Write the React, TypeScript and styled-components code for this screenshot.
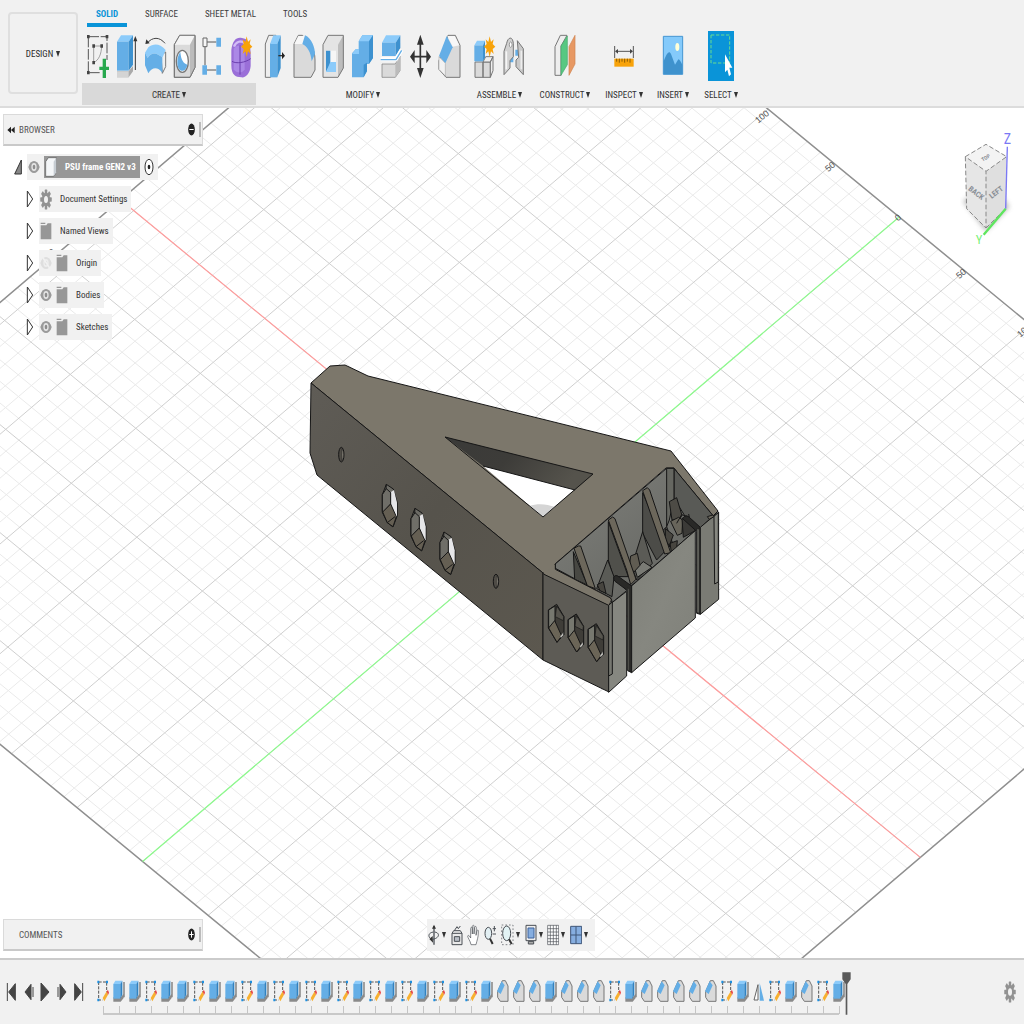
import React from "react";
import styled, { createGlobalStyle } from "styled-components";

const GlobalStyle = createGlobalStyle`
  * { box-sizing: border-box; }
  html, body { margin: 0; padding: 0; }
  body {
    background: #fff;
    color: #3c3c3c;
    font-family: "Liberation Sans Narrow", "Roboto Condensed", "Liberation Sans", Arial, sans-serif;
    font-size: 9px;
    line-height: 12px;
  }
  button {
    margin: 0;
    padding: 0;
    border: 0;
    background: none;
    color: inherit;
    font: inherit;
    cursor: pointer;
  }
  svg { display: block; }
  ul, ol { margin: 0; padding: 0; list-style: none; }
`;

const Page = styled.div`
  display: flex;
  flex-direction: column;
  min-height: 100vh;
`;

/* ---------- toolbar ---------- */

const Toolbar = styled.header`
  display: flex;
  align-items: stretch;
  height: 108px;
  background: #f1f1f1;
  border-bottom: 2px solid #dcdcdc;
`;

const WorkspaceButton = styled.button`
  display: flex;
  align-items: center;
  justify-content: center;
  gap: 3px;
  width: 70px;
  height: 82px;
  margin: 12px 4px 0 8px;
  padding-top: 2px;
  border: 2px solid #dfdfdf;
  border-radius: 4px;
  color: #2b2b2b;
`;

const Ribbon = styled.div`
  display: flex;
  flex-direction: column;
  flex: 1;
`;

const Tabs = styled.nav`
  display: flex;
  gap: 9px;
  height: 28px;
  padding: 0 5px;
`;

const Tab = styled.button<{ $active?: boolean }>`
  height: 27px;
  padding: 4px 9px 0;
  white-space: nowrap;
  color: ${(p) => (p.$active ? "#0a94d8" : "#3c3c3c")};
  font-weight: ${(p) => (p.$active ? 700 : 400)};
  border-bottom: 4px solid ${(p) => (p.$active ? "#0a94d8" : "transparent")};
`;

const Groups = styled.div`
  display: flex;
`;

const Group = styled.section<{ $width: number }>`
  position: relative;
  display: flex;
  flex-direction: column;
  align-items: center;
  width: ${(p) => p.$width}px;
  &:first-child { margin-right: 3px; }
  & + &::before {
    content: "";
    position: absolute;
    left: 0;
    top: 6px;
    width: 1px;
    height: 68px;
    background: #dadada;
  }
`;

const Tools = styled.div`
  display: flex;
  height: 55px;
  padding-top: 4px;
`;

const ToolButton = styled.button`
  display: flex;
  justify-content: center;
  width: 29px;
  height: 48px;
`;

const SelectTool = styled(ToolButton)`
  width: 26px;
  height: 50px;
  margin-top: -1px;
  background: #0a94d8;
`;

const GroupMenu = styled.button<{ $open?: boolean }>`
  display: flex;
  align-items: center;
  justify-content: center;
  gap: 2px;
  align-self: stretch;
  height: 22px;
  padding-top: 2px;
  white-space: nowrap;
  color: #333;
  background: ${(p) => (p.$open ? "#d9d9d9" : "transparent")};
`;

const CaretShape = styled.span`
  width: 0;
  height: 0;
  border: solid transparent;
  border-width: 6px 2px 0;
  border-top-color: #333;
`;

/* ---------- viewport ---------- */

const Viewport = styled.main`
  position: relative;
  display: flex;
  flex-direction: column;
  justify-content: space-between;
  flex: 1;
  min-height: 600px;
  overflow: hidden;
`;

const SceneLayer = styled.svg`
  position: absolute;
  inset: 0;
  width: 100%;
  height: 100%;
`;

const UpperRow = styled.div`
  position: relative;
  display: flex;
  justify-content: space-between;
  align-items: flex-start;
  padding: 6px 8px 0 3px;
`;

const LowerRow = styled.div`
  position: relative;
  display: grid;
  grid-template-columns: 1fr auto 1fr;
  align-items: end;
  padding: 0 5px 7px 3px;
`;

const Panel = styled.div`
  display: flex;
  align-items: center;
  width: 200px;
  height: 32px;
  padding: 0 1px 0 3px;
  background: #f1f1f1;
  border: 1px solid #dadada;
  border-bottom: 2px solid #c9c9c9;
  color: #555;
`;

const PanelLead = styled.span`
  width: 8px;
`;

const PanelTitle = styled.h2`
  flex: 1;
  margin: 0;
  padding-left: 4px;
  font: inherit;
`;

const PanelIcon = styled.button`
  display: flex;
  width: 8px;
  margin-right: 3px;
`;

const Grip = styled.span`
  width: 2px;
  height: 15px;
  background: #bbb;
`;

const Tree = styled.ul`
  padding-top: 5px;
`;

const TreeRow = styled.li<{ $depth: number }>`
  display: flex;
  align-items: center;
  gap: 5px;
  height: 32px;
  padding-left: ${(p) => (p.$depth ? 23 : 11)}px;
`;

const Expander = styled.button`
  width: 8px;
`;

const TreeItem = styled.div`
  display: flex;
  align-items: center;
  gap: 4px;
  height: 26px;
  padding: 0 4px 0 1px;
  background: #f1f1f1;
  white-space: nowrap;
  color: #333;
`;

const TreeLabel = styled.span`
  padding-left: 4px;
`;

const RootLabel = styled.span`
  display: flex;
  align-items: center;
  gap: 8px;
  height: 22px;
  padding: 0 4px 0 1px;
  background: #979797;
  color: #fff;
  font-weight: 700;
`;

const NavBar = styled.div`
  display: flex;
  align-items: center;
  justify-content: space-between;
  width: 168px;
  height: 32px;
  padding: 0 7px 0 1px;
  background: #f1f1f1;
`;

const NavButton = styled.button`
  display: flex;
  align-items: center;
  gap: 2px;
`;

/* ---------- timeline ---------- */

const Timeline = styled.footer`
  display: flex;
  align-items: flex-start;
  height: 66px;
  padding: 0 6px 0 4px;
  background: #f1f1f1;
  border-top: 2px solid #cbcbcb;
`;

const Playback = styled.div`
  display: flex;
  justify-content: space-between;
  width: 82px;
  margin: 21px 9px 0 0;
`;

const PlayButton = styled.button`
  display: flex;
  justify-content: center;
  width: 16px;
`;

const Features = styled.ol`
  display: flex;
  padding-top: 18px;
`;

const Feature = styled.li`
  display: flex;
  flex-direction: column;
  align-items: center;
  width: 16px;
  padding-bottom: 1px;
  background: linear-gradient(#c8c8c8, #c8c8c8) 0 100% / 100% 2px no-repeat;
  &::after {
    content: "";
    width: 1px;
    height: 8px;
    margin-top: 2px;
    background: #c4c4c4;
  }
  &:first-child { background-position: 8px 100%; }
  &:last-child { background-size: 50% 2px; }
`;

const Marker = styled.div`
  margin: 12px 0 0 -5px;
`;

const Settings = styled.button`
  margin: 21px 2px 0 auto;
`;

/* ---------- tool icons ---------- */

const BLUE = "#64aee6";
const LIGHT = "#8ccbfa";
const DEEP = "#3d91cf";
const GREY = "#dadada";
const LINE = "#777";

function Icon({ children }: { children: React.ReactNode }) {
  return (
    <svg width="24" height="48" viewBox="0 0 72 144" aria-hidden="true">
      {children}
    </svg>
  );
}

const Star = ({ x, y }: { x: number; y: number }) => (
  <path
    transform={`translate(${x} ${y})`}
    fill="#f8a30a"
    d="M0-31 4-14 12-22 9-8 17 0 9 7 12 22 4 14 0 31-4 14-12 22-9 7-17 0-9-8-12-22-4-14Z"
  />
);

const icons: Record<string, React.ReactNode> = {
  sketch: (
    <>
      <path d="M10 14H66V84M10 14V122H44" fill="none" stroke="#555" strokeWidth="3" strokeDasharray="32 5" />
      <path d="M26 92V42H50C49 66 42 84 26 92" fill="none" stroke="#777" strokeWidth="2" />
      <path d="M6 9h8v10H6zM62 9h8v10h-8zM6 117h8v10H6zM22 37h8v10h-8zM46 37h8v10h-8zM22 87h8v10h-8z" fill="#444" />
      <path d="M53 80h10v24h10v10H63v24H53v-24H43v-10h10z" fill="#28a84e" />
    </>
  ),
  extrude: (
    <>
      <path d="M9 118H44L57 102V118L44 136H9Z" fill="#aaa" />
      <path d="M9 118H44V136H9Z" fill="#d4d4d4" />
      <path d="M9 29 21 10H57L44 29Z" fill={LIGHT} />
      <path d="M9 29H44V116H9Z" fill={BLUE} />
      <path d="M44 29 57 10V98L44 116Z" fill={DEEP} />
      <path d="M64 114V20" stroke="#333" strokeWidth="3" />
      <path d="M64 12 70 28H58Z" fill="#333" />
    </>
  ),
  revolve: (
    <>
      <path d="M54 70 68 60V104L58 124Z" fill="#eee" stroke={LINE} strokeWidth="3" />
      <path d="M6 62 16 46C32 34 50 34 68 54L58 78C42 60 24 60 14 78Z" fill={LIGHT} />
      <path d="M6 62 14 78C24 60 42 60 58 78V122C44 104 28 104 16 124L6 100Z" fill={BLUE} />
      <path d="M12 34C28 14 50 14 66 34" fill="none" stroke="#444" strokeWidth="3" />
      <path d="M7 36 10 22 20 34Z" fill="#333" />
    </>
  ),
  hole: (
    <>
      <path d="M7 38 23 10H69V106L54 136H7Z" fill={GREY} stroke={LINE} strokeWidth="3" />
      <path d="M7 38 23 10H69L54 38Z" fill="#f4f4f4" />
      <path d="M54 38 69 10V106L54 136Z" fill="#bbb" />
      <path d="M7 38 23 10H69V106L54 136H7Z" fill="none" stroke={LINE} strokeWidth="3" />
      <ellipse cx="31" cy="88" rx="18" ry="33" fill="#fff" stroke={LINE} strokeWidth="4" />
      <path d="M25 60C27 84 34 94 46 98C43 116 28 124 19 108C13 92 17 70 25 60Z" fill={BLUE} />
    </>
  ),
  pattern: (
    <>
      <path d="M12 44V100M18 30H46M18 114H46" stroke="#555" strokeWidth="3" />
      <path d="M6 18H18V44H6Z" fill="#f6f6f6" stroke="#666" strokeWidth="3" />
      <path d="M46 17H60V44H46ZM4 100H18V128H4ZM46 100H60V128H46Z" fill={BLUE} />
    </>
  ),
  form: (
    <>
      <path d="M4 54C8 24 20 14 36 18C52 20 60 30 62 62V102C60 124 48 138 34 136C16 136 4 128 4 100Z" fill="#9a6fd8" />
      <path d="M11 50C20 38 38 36 44 50V112C36 126 20 124 11 112Z" fill="#ab88e6" />
      <path d="M6 88C18 96 46 92 62 80M30 40V128" fill="none" stroke="#6b3fae" strokeWidth="3" />
      <path d="M12 44C18 28 34 24 44 34" fill="none" stroke="#d3bdf6" strokeWidth="7" />
      <Star x={50} y={44} />
    </>
  ),
  press: (
    <>
      <path d="M4 36 14 10H36L20 36V136H4Z" fill="#eee" stroke={LINE} strokeWidth="3" />
      <path d="M18 36 28 10H50L40 36Z" fill={LIGHT} />
      <path d="M18 36H40V136H18Z" fill={BLUE} />
      <path d="M40 36 50 10V108L40 136Z" fill={DEEP} />
      <path d="M43 71H58" stroke="#333" strokeWidth="4" />
      <path d="M54 60 63 71 54 82Z" fill="#222" />
    </>
  ),
  fillet: (
    <>
      <path d="M3 36 16 10H28C50 28 66 50 66 84V114L54 136H3Z" fill={GREY} stroke={LINE} strokeWidth="3" />
      <path d="M4 36 16 12H38L30 36Z" fill="#f7f7f7" />
      <path d="M28 36 36 10C56 18 66 48 66 66L56 88C54 60 42 42 28 36Z" fill={BLUE} />
    </>
  ),
  shell: (
    <>
      <path d="M3 38 18 10H64V108L48 136H3Z" fill="#e4e4e4" />
      <path d="M48 38 64 10V108L48 136Z" fill="#bdbdbd" />
      <path d="M3 38 18 10H64V108L48 136H3Z" fill="none" stroke={LINE} strokeWidth="3" />
      <path d="M12 56H42V120H12Z" fill="#f6f6f6" />
      <path d="M12 56H25V96L12 120Z" fill={DEEP} />
      <path d="M25 90H42V120H12Z" fill={LIGHT} />
    </>
  ),
  combine: (
    <>
      <path d="M23 28 34 10H66V78L53 96H47V118L38 136H3V64L14 52H23Z" fill={BLUE} />
      <path d="M23 28 34 10H66L54 28ZM3 66 14 52H24V66Z" fill={LIGHT} />
      <path d="M54 28 66 10V78L54 96ZM38 98 48 92V118L38 136Z" fill={DEEP} />
    </>
  ),
  split: (
    <>
      <path d="M6 96H46L60 72V116L46 136H6Z" fill={GREY} stroke={LINE} strokeWidth="2" />
      <path d="M46 98 60 76V116L46 136Z" fill="#bbb" />
      <path d="M6 32 18 10H61L47 32Z" fill={LIGHT} />
      <path d="M6 32H47V72H6Z" fill={BLUE} />
      <path d="M47 32 61 10V48L47 72Z" fill={DEEP} />
      <path d="M2 82H48L65 54" fill="none" stroke="#fff" strokeWidth="12" />
      <path d="M2 83H48L65 55" fill="none" stroke={BLUE} strokeWidth="4" />
    </>
  ),
  move: (
    <>
      <path d="M34 28V120M14 74H56" stroke="#333" strokeWidth="5" />
      <path d="M34 8 44 38H24ZM34 138 44 108H24ZM3 74 17 54V94ZM66 74 52 54V94Z" fill="#333" />
    </>
  ),
  chamfer: (
    <>
      <path d="M3 86 30 10H52L66 40V136H24L3 112Z" fill={GREY} stroke={LINE} strokeWidth="3" />
      <path d="M28 12H50L64 40 44 44Z" fill="#f8f8f8" />
      <path d="M3 72 26 12 44 46 22 94Z" fill={BLUE} />
      <path d="M3 74 22 94V132L3 112Z" fill="#f2f2f2" stroke={LINE} strokeWidth="1" />
    </>
  ),
  component: (
    <>
      <path d="M6 90H30V136H6ZM30 90H52V136H30Z" fill={GREY} stroke={LINE} strokeWidth="3" />
      <path d="M30 90 38 74H60L52 90ZM52 90 60 74V116L52 136Z" fill="#efefef" stroke={LINE} strokeWidth="3" />
      <path d="M4 40 12 26H36L30 40Z" fill={LIGHT} />
      <path d="M4 40H30V88H4Z" fill={BLUE} />
      <path d="M30 40 36 26V76L30 88Z" fill={DEEP} />
      <Star x={50} y={44} />
    </>
  ),
  joint: (
    <>
      <path d="M24 82H34M40 62H48" stroke={BLUE} strokeWidth="18" />
      <path d="M6 58 14 34C18 14 32 12 34 34V74L24 86V108L6 128Z" fill="#d2d2d2" stroke={LINE} strokeWidth="3" />
      <path d="M13 58V112" stroke="#f6f6f6" strokeWidth="5" />
      <ellipse cx="26" cy="38" rx="4" ry="8" fill="#fff" stroke={LINE} strokeWidth="2" />
      <path d="M46 26 64 50V128L42 104V84L50 76Z" fill="#c9c9c9" stroke={LINE} strokeWidth="3" />
      <path d="M58 56V112" stroke="#eee" strokeWidth="5" />
    </>
  ),
  plane: (
    <>
      <path d="M6 44 22 10H42L24 42V130H6Z" fill="#eee" stroke={LINE} strokeWidth="3" />
      <path d="M24 42 43 12V98L24 130Z" fill="#58c882" stroke="#46a869" strokeWidth="2" />
      <path d="M48 44 66 10V96L48 130Z" fill="#e79863" stroke="#cf8350" strokeWidth="2" />
    </>
  ),
  measure: (
    <>
      <path d="M8 42V78M64 42V78M12 58H60" stroke="#555" strokeWidth="3" />
      <path d="M9 58 18 51V65ZM63 58 54 51V65Z" fill="#444" />
      <path d="M7 80H65V104H7Z" fill="#f8a30a" />
      <path d="M14 80v9M22 80v12M30 80v9M38 80v12M46 80v9M54 80v12" stroke="#8b5c05" strokeWidth="3" />
    </>
  ),
  image: (
    <>
      <path d="M7 13H65V127H7Z" fill="#84cafb" stroke="#4596d2" strokeWidth="3" />
      <path d="M8 88C16 66 24 52 30 66L42 98 52 82C56 82 60 90 64 98V126H8Z" fill="#3f92cd" />
      <ellipse cx="49" cy="45" rx="6" ry="12" fill="#ffffd8" />
    </>
  ),
  select: (
    <>
      <path d="M6 12H62V96H6Z" fill="none" stroke="#69dc90" strokeWidth="3" strokeDasharray="10 5" />
      <path d="M48 70V124L55 116 60 136 66 130 61 110H70Z" fill="#fff" />
    </>
  ),
};

const Caret = () => <CaretShape aria-hidden="true" />;

type GroupData = { label: string; width: number; tools: string[] };

const groups: GroupData[] = [
  { label: "CREATE", width: 174, tools: ["sketch", "extrude", "revolve", "hole", "pattern", "form"] },
  { label: "MODIFY", width: 208, tools: ["press", "fillet", "shell", "combine", "split", "move", "chamfer"] },
  { label: "ASSEMBLE", width: 65, tools: ["component", "joint"] },
  { label: "CONSTRUCT", width: 66, tools: ["plane"] },
  { label: "INSPECT", width: 52, tools: ["measure"] },
  { label: "INSERT", width: 46, tools: ["image"] },
  { label: "SELECT", width: 50, tools: ["select"] },
];

/* ---------- small symbols ---------- */

const Gear = ({ width, height }: { width: number; height: number }) => (
  <svg width={width} height={height} viewBox="0 0 24 24" preserveAspectRatio="none" aria-hidden="true">
    <g fill="#929292">
      {[0, 45, 90, 135].map((a) => (
        <rect key={a} x="9.5" y="0.5" width="5" height="23" rx="1" transform={`rotate(${a} 12 12)`} />
      ))}
      <circle cx="12" cy="12" r="8" />
    </g>
    <circle cx="12" cy="12" r="4" fill="#f1f1f1" />
  </svg>
);

const Eye = ({ off }: { off?: boolean }) => (
  <svg width="12" height="16" viewBox="0 0 36 48" aria-hidden="true">
    <path d="M1 24C7 0 29 0 35 24C29 48 7 48 1 24Z" fill={off ? "#dedede" : "#9a9a9a"} />
    <ellipse cx="18" cy="24" rx="8" ry="12" fill={off ? "#eee" : "#e4e4e4"} />
    <ellipse cx="18" cy="24" rx="4" ry="7" fill={off ? "#dedede" : "#8d8d8d"} />
    {off && <path d="M6 4 32 44" stroke="#f1f1f1" strokeWidth="5" />}
  </svg>
);

const Folder = () => (
  <svg width="12" height="18" viewBox="0 0 36 54" aria-hidden="true">
    <path d="M2 2H16V6H2ZM2 10H19L23 4H34V52H2Z" fill="#979797" />
  </svg>
);

const Closed = () => (
  <svg width="8" height="18" viewBox="0 0 24 54" aria-hidden="true">
    <path d="M4 3V51L20 27Z" fill="#fff" stroke="#333" strokeWidth="3" />
  </svg>
);

const Opened = () => (
  <svg width="8" height="16" viewBox="0 0 24 48" aria-hidden="true">
    <path d="M22 3V45H2Z" fill="#888" stroke="#333" strokeWidth="3" />
  </svg>
);

const RoundSign = ({ plus }: { plus?: boolean }) => (
  <svg width="7" height="13" viewBox="0 0 21 39" aria-hidden="true">
    <ellipse cx="10.500" cy="19.500" rx="10" ry="18" fill="#222" />
    <path d={plus ? "M4 19.500H17M10.500 10V29" : "M4 19.500H17"} stroke="#fff" strokeWidth="3" />
  </svg>
);

/* ---------- scene ---------- */

const C = [527, 534];
const U = [65.55, 53.9];
const V = [64.5, -54.95];
const at = (u: number, v: number) => `${C[0] + u * U[0] + v * V[0]} ${C[1] + u * U[1] + v * V[1]}`;
const U0 = -6.2;
const U1 = 6;
const V0 = -5.96;
const V1 = 5.77;

const steps = Array.from({ length: 63 }, (_, i) => i - 31);
const isMajor = (i: number) => i % 5 === 0;
const gridPath = (major: boolean) =>
  steps
    .filter((i) => isMajor(i) === major)
    .map((i) => {
      const k = i / 5;
      const a = k > U0 && k < U1 ? `M${at(k, V0)}L${at(k, V1)}` : "";
      const b = k > V0 && k < V1 ? `M${at(U0, k)}L${at(U1, k)}` : "";
      return a + b;
    })
    .join("");

const EDGE = { stroke: "#161616", strokeWidth: 3, strokeLinejoin: "round" as const };

const hexes: [number, number][] = [[270, 466], [356, 538], [443, 609]];
const frontHexes: [number, number][] = [[168, 610], [227, 639], [287, 668]];

function Scene() {
  return (
    <SceneLayer viewBox="0 108 1024 850" preserveAspectRatio="xMidYMid slice" role="img" aria-label="PSU frame model on grid">
      <defs>
        <linearGradient id="side" x1="0" y1="0" x2="1" y2="1">
          <stop offset="0" stopColor="#5f5c56" />
          <stop offset="0.5" stopColor="#56534c" />
          <stop offset="1" stopColor="#5c584f" />
        </linearGradient>
        <linearGradient id="wall" x1="0" y1="0" x2="1" y2="0.3">
          <stop offset="0" stopColor="#3a3a38" />
          <stop offset="0.5" stopColor="#3d3c39" />
          <stop offset="1" stopColor="#55534c" />
        </linearGradient>
        <linearGradient id="bay" x1="0" y1="0" x2="1" y2="1">
          <stop offset="0" stopColor="#80817c" />
          <stop offset="1" stopColor="#5f605c" />
        </linearGradient>
        <linearGradient id="plate" x1="0" y1="0" x2="1" y2="1">
          <stop offset="0" stopColor="#7e7f78" />
          <stop offset="0.5" stopColor="#868780" />
          <stop offset="1" stopColor="#7f8079" />
        </linearGradient>
      </defs>

      <g fill="none">
        <path d={gridPath(false)} stroke="#eaeaea" />
        <path d={gridPath(true)} stroke="#cfcfcf" />
        <path d={`M${at(U0, V0)}L${at(U1, V0)}L${at(U1, V1)}L${at(U0, V1)}Z`} stroke="#8f8f8f" strokeWidth="1.500" />
        <path d={`M${at(U0, 0)}L${at(U1, 0)}`} stroke="#ff9c9c" strokeWidth="1.200" />
        <path d={`M${at(0, V0)}L${at(0, V1)}`} stroke="#8dfa8d" strokeWidth="1.200" />
      </g>
      <g fontSize="9" fill="#555" textAnchor="middle" fontFamily="Liberation Sans, sans-serif">
        <text transform="translate(764 119) rotate(-40)">100</text>
        <text transform="translate(832 169) rotate(-40)">50</text>
        <text transform="translate(900 220) rotate(-40)">0</text>
        <text transform="translate(963 276) rotate(-40)">50</text>
        <text transform="translate(1026 333) rotate(-40)">100</text>
        <text transform="translate(52 256) rotate(-40)">50</text>
      </g>

      {/* outer body */}
      <g stroke="#161616" strokeWidth="1" strokeLinejoin="round">
        <path fill="#7c776b" d="M311 383 330 366 345 365 368 376 671 451 718 511 711 518 674 468H666L555 564V568L611 600 609 605 543 573Z" />
        <path fill="url(#side)" d="M311 383 543 573V660L317 475 310 453Z" />
        <path fill="#5d5b55" d="M543 573 609 605V692L543 660Z" />
      </g>

      {/* triangular cut-out */}
      <path fill="#fff" d="M483 466 575 489 543 517Z" />
      <path fill="#d5d5d5" d="M529 506C538 503 547 504 555 507L543 517Z" />
      <path fill="url(#wall)" d="M445 437 593 474 575 490 483 466Z" />
      <path fill="none" stroke="#161616" d="M445 437 593 474 543 517ZM483 466 575 490" />

      {/* long side holes */}
      <g transform="translate(300 350) scale(0.3333)" {...EDGE}>
        {hexes.map(([x, y]) => (
          <g key={x} transform={`translate(${x} ${y})`}>
            <path fill="#6c6b65" d="M-11-63 10-49 22-8V31L9 65-8 52-23 21V-32Z" />
            <path fill="#e6e6e8" stroke="none" d="M3-40 12-46 21-8V32L14 36 3-4Z" />
            <path fill="#6f6e68" d="M-23-32-11-50 2-38V-4L-20 20-23 18Z" />
            <path fill="#655f53" d="M-22 20 2-4 19 34 9 64-8 52Z" />
            <path fill="none" d="M-8 52 15 34M-11-63-12-48" />
          </g>
        ))}
        <ellipse cx="124" cy="314" rx="8" ry="22" fill="#4f4c46" />
        <path d="M126 296C132 306 132 322 126 332Z" fill="#8a867c" strokeWidth="1" />
        <ellipse cx="588" cy="694" rx="8" ry="21" fill="#4f4c46" />
        <path d="M590 678C596 686 596 702 590 711Z" fill="#8a867c" strokeWidth="1" />
      </g>

      {/* open end with ribs and clips */}
      <g transform="translate(500 420) scale(0.3333)" {...EDGE}>
        <path fill="url(#bay)" d="M166 432 500 145H522L640 288 600 324 560 290 586 332 393 498 345 470 380 512 326 556 335 535 166 445Z" />
        <path fill="#595a56" d="M522 145 640 288 600 324 556 290 522 235Z" />
        <path fill="#666761" d="M500 145H522V235L508 300 500 320Z" />
        <path fill="#4c4c48" d="M428 218 480 340 500 320 518 370 470 420 428 340Z" />
        <path fill="#50504b" d="M325 305 385 470 340 470 325 420Z" />
        <path fill="#484843" d="M220 395 262 495 224 478Z" />
        <path fill="#5b5b56" d="M428 335 457 430 410 480 395 440Z" />
        <path fill="#7a7b75" d="M405 448 430 425 456 442 412 472Z" />
        <path fill="#605c52" d="M392 408 412 400 420 436 402 456 388 440Z" />
        <path fill="#5a5b56" d="M323 420 342 470 336 530 290 506Z" />
        <path fill="#47453f" d="M292 494 310 485 318 520 300 512Z" />
        <path fill="#47453f" d="M496 326 520 345 508 378 496 360ZM510 370 532 362 530 385 514 396Z" />
        <path fill="#6c675b" d="M222 385 235 378H242L286 506 262 497Z" />
        <path fill="#6c675b" d="M325 300 338 291 345 296 408 478 392 494 380 450Z" />
        <path fill="#6c675b" d="M428 212 442 203 449 210 512 398 494 402Z" />
        <path fill="#4d4b45" d="M508 245 530 233 546 286 540 296 516 300Z" />
        <path fill="#68655b" d="M512 304 536 292 548 300 546 340 532 346Z" />
        <path fill="#3b3a37" d="M546 296 560 288 586 318V332L550 352Z" />
        <path fill="none" d="M530 310 545 284 568 292 566 282" />

        <path fill="#7c776b" stroke="none" d="M130 462 166 432V448L335 535 326 556Z" />
        <path fill="none" d="M166 432V448L330 533Q338 540 335 548L326 556 130 462" />
        <path fill="#868780" d="M326 556 380 514V768L326 817Z" />
        <path fill="#777871" d="M326 556 337 546V762L326 768Z" />
        <path fill="#292927" d="M342 478C338 466 350 464 356 470L395 498V758L383 752V512L345 484Z" />
        <path fill="#555650" d="M383 504 388 508V753L383 750Z" strokeWidth="1" />
        <path fill="url(#plate)" d="M395 498 586 332V594L395 758Z" />
        <path fill="#292927" d="M548 296C552 286 562 286 568 292L601 322V583L590 580V334Z" />
        <path fill="#62635d" d="M591 326 598 328V580L591 577Z" strokeWidth="1" />
        <path fill="#7a7b74" d="M601 322 656 276V538L601 583Z" />
        <path fill="#868780" d="M642 289 655 278V486L644 492Z" />
        <path fill="#6f6b60" d="M622 290 638 285 642 290 628 298Z" />

        {frontHexes.map(([x, y]) => (
          <g key={x} transform={`translate(${x} ${y})`}>
            <path fill="#3f3d38" d="M2-57 24-20V34L3 57-23 14V-40Z" />
            <path fill="#77786f" d="M-22-40-3-52V-4L-22 14Z" />
            <path fill="#6b6557" d="M-22 14-4-8 17 38 3 57Z" />
            <path fill="#57554e" d="M2-52 23-20 22-8-2-20Z" strokeWidth="2" />
            <path fill="#c9c9c4" d="M12 40 22 26V36L15 44Z" strokeWidth="1" />
          </g>
        ))}
      </g>
    </SceneLayer>
  );
}

function ViewCube() {
  return (
    <svg width="56" height="134" viewBox="660 48 168 402" role="img" aria-label="View cube">
      <defs>
        <filter id="soft" x="-30%" y="-30%" width="160%" height="160%">
          <feGaussianBlur stdDeviation="8" />
        </filter>
      </defs>
      <path d="M670 310 738 400 808 326 790 300H680Z" fill="#888" opacity="0.6" filter="url(#soft)" />
      <path d="M676 176 738 139 800 176 738 220Z" fill="#f3f3f3" />
      <path d="M676 176 738 220V390L680 332Z" fill="#e6e6e6" />
      <path d="M738 220 800 176 797 332 738 390Z" fill="#dfdfdf" />
      <path
        d="M676 176 738 139 800 176 738 220ZM676 176 680 332 738 390V220M738 390 797 332"
        fill="none"
        stroke="#888"
        strokeWidth="3"
        strokeDasharray="14 7"
      />
      <path d="M802 146 797 332" stroke="#7a78f5" strokeWidth="4" />
      <path d="M797 332 731 410" stroke="#5ee65e" strokeWidth="7" />
      <g textAnchor="middle" fontFamily="Roboto Condensed, Liberation Sans, sans-serif">
        <text x="802" y="138" fontSize="42" fill="#7a78f5">Z</text>
        <text x="717" y="438" fontSize="38" fill="#7af07a">Y</text>
        <g fill="#8a8f96" fontSize="23" fontWeight="700">
          <text transform="translate(704 291) rotate(38)">BACK</text>
          <text transform="translate(773 289) rotate(-38)">LEFT</text>
          <text transform="translate(740 184) rotate(-30)" fontSize="16">TOP</text>
        </g>
      </g>
    </svg>
  );
}

/* ---------- navigation icons ---------- */

const NavSvg = ({ width, children }: { width: number; children: React.ReactNode }) => (
  <svg width={width} height="22" viewBox={`0 0 ${width * 3} 66`} aria-hidden="true" fill="none" stroke="#4a4f55" strokeWidth="3">
    {children}
  </svg>
);

const navTools: { name: string; menu?: boolean; art: React.ReactNode }[] = [
  {
    name: "Orbit",
    menu: true,
    art: (
      <NavSvg width={12}>
        <path d="M18 6V62" strokeWidth="4" />
        <path d="M18 2 24 14H12ZM14 36 4 45 15 56Z" fill="#333" stroke="none" />
        <path d="M20 24C36 26 36 42 14 46M16 24C2 26 0 36 6 42" />
      </NavSvg>
    ),
  },
  {
    name: "Look at",
    art: (
      <NavSvg width={12}>
        <path d="M3 28H33V62H3ZM3 28 8 20H28L33 28M10 20 18 8 22 14 28 6" fill="#e9e9e9" />
        <path d="M10 38H26V52H10Z" fill="#b9bec6" />
      </NavSvg>
    ),
  },
  {
    name: "Pan",
    art: (
      <NavSvg width={12}>
        <path
          d="M12 62C10 50 2 42 2 36C4 32 8 36 11 42V14C12 8 16 8 16 14V30 8C17 2 21 2 21 8V30L23 10C24 6 28 6 28 12L27 34 30 20C32 16 35 18 34 24C34 42 30 48 27 62Z"
          fill="#fff"
          strokeWidth="2"
        />
      </NavSvg>
    ),
  },
  {
    name: "Zoom",
    art: (
      <NavSvg width={12}>
        <ellipse cx="13" cy="28" rx="10" ry="18" fill="#e2eff3" />
        <path d="M18 44 26 60" strokeWidth="6" stroke="#333" />
        <path d="M26 14H36M31 6V22M26 30H36" />
      </NavSvg>
    ),
  },
  {
    name: "Zoom window",
    menu: true,
    art: (
      <NavSvg width={13}>
        <path d="M2 3H36V62H2Z" strokeDasharray="5 6" strokeWidth="2" />
        <ellipse cx="17" cy="28" rx="12" ry="22" fill="#e2f3f5" />
        <path d="M24 46 32 60" strokeWidth="6" stroke="#333" />
      </NavSvg>
    ),
  },
  {
    name: "Display settings",
    menu: true,
    art: (
      <NavSvg width={12}>
        <path d="M3 4H33V50H3Z" fill="#eee" />
        <path d="M9 12H27V42H9Z" fill="#86aee0" stroke="#3e639b" />
        <path d="M10 52H26V60H10Z" fill="#aaa" />
      </NavSvg>
    ),
  },
  {
    name: "Grid and snaps",
    menu: true,
    art: (
      <NavSvg width={12}>
        <path d="M2 4H35V62H2Z" fill="#fff" strokeWidth="2" />
        <path d="M10 4V62M19 4V62M28 4V62M2 14H35M2 24H35M2 34H35M2 44H35M2 53H35" strokeWidth="2" />
      </NavSvg>
    ),
  },
  {
    name: "Viewports",
    menu: true,
    art: (
      <NavSvg width={12}>
        <path d="M2 7H35V59H2Z" fill="#86aee0" stroke="#3f5678" />
        <path d="M18 7V59M2 33H35" stroke="#3f5678" />
      </NavSvg>
    ),
  },
];

/* ---------- timeline icons ---------- */

const featureNames: Record<string, string> = { S: "Sketch", E: "Extrude", C: "Chamfer", M: "Mirror" };

const FeatureIcon = ({ kind }: { kind: string }) => (
  <svg width="14" height="26" viewBox="0 0 42 78" role="img" aria-label={featureNames[kind]}>
    {kind === "S" && (
      <>
        <path d="M8 12H32V44M8 12V66H20" fill="none" stroke="#555" strokeWidth="3" strokeDasharray="9 4" />
        <path d="M4 8h6v8H4zM30 8h6v8h-6zM4 62h6v8H4z" fill="#1e8fe0" />
        <path d="M20 60 32 40 36 50 25 70Z" fill="#f7b030" />
        <path d="M32 40 36 36 39 44 36 51Z" fill="#e84040" />
      </>
    )}
    {kind === "E" && (
      <>
        <path d="M4 58H26L35 48V60L26 71H4Z" fill="#8a8a8a" />
        <path d="M4 18 10 8H31L25 18Z" fill={LIGHT} />
        <path d="M4 18H25V62H4Z" fill={BLUE} />
        <path d="M25 18 31 8V50L25 62Z" fill="#2f83c4" />
        <path d="M36 12V58" stroke="#777" strokeWidth="4" />
      </>
    )}
    {kind === "C" && (
      <>
        <path d="M5 40 19 8H28L36 24V70H13L5 58Z" fill={GREY} stroke="#777" strokeWidth="3" />
        <path d="M3 40 17 10 26 22 14 48Z" fill={BLUE} />
      </>
    )}
    {kind === "M" && (
      <>
        <path d="M18 20V66H6Z" fill="#fff" stroke="#666" strokeWidth="3" />
        <path d="M23 14 36 68H23Z" fill={BLUE} />
      </>
    )}
  </svg>
);

const features = "SEESEESEESESESESESESESESECCCECCCSECCCCCSEMSECSE".split("");

const playback: [string, string][] = [
  ["Go to start", "M4 4V58M28 6 8 31 28 56Z"],
  ["Step back", "M24 8 6 31 24 54ZM30 16V46"],
  ["Play", "M6 4 30 31 6 58Z"],
  ["Step forward", "M12 8 30 31 12 54ZM6 16V46"],
  ["Go to end", "M8 6 28 31 8 56ZM32 4V58"],
];

const treeRows: { label: string; icon: "gear" | "folder"; eye?: "on" | "off" }[] = [
  { label: "Document Settings", icon: "gear" },
  { label: "Named Views", icon: "folder" },
  { label: "Origin", icon: "folder", eye: "off" },
  { label: "Bodies", icon: "folder", eye: "on" },
  { label: "Sketches", icon: "folder", eye: "on" },
];

export default function App() {
  return (
    <Page>
      <GlobalStyle />
      <Toolbar>
        <WorkspaceButton>
          DESIGN <Caret />
        </WorkspaceButton>
        <Ribbon>
          <Tabs>
            <Tab $active>SOLID</Tab>
            <Tab>SURFACE</Tab>
            <Tab>SHEET METAL</Tab>
            <Tab>TOOLS</Tab>
          </Tabs>
          <Groups>
            {groups.map((g) => (
              <Group key={g.label} $width={g.width}>
                <Tools>
                  {g.tools.map((t) => {
                    const Button = t === "select" ? SelectTool : ToolButton;
                    return (
                      <Button key={t} aria-label={t}>
                        <Icon>{icons[t]}</Icon>
                      </Button>
                    );
                  })}
                </Tools>
                <GroupMenu $open={g.label === "CREATE"}>
                  {g.label}
                  <Caret />
                </GroupMenu>
              </Group>
            ))}
          </Groups>
        </Ribbon>
      </Toolbar>

      <Viewport>
        <Scene />
        <UpperRow>
          <div>
            <Panel>
              <PanelLead>
                <svg width="8" height="8" viewBox="0 0 24 24" aria-hidden="true">
                  <path d="M12 2V22L1 12ZM23 2V22L12 12Z" fill="#222" />
                </svg>
              </PanelLead>
              <PanelTitle>BROWSER</PanelTitle>
              <PanelIcon aria-label="Collapse browser">
                <RoundSign />
              </PanelIcon>
              <Grip />
            </Panel>
            <Tree>
              <TreeRow $depth={0}>
                <Expander aria-label="Collapse PSU frame">
                  <Opened />
                </Expander>
                <TreeItem>
                  <Eye />
                  <RootLabel>
                    <svg width="12" height="20" viewBox="0 0 36 60" aria-hidden="true">
                      <path d="M2 14 10 2H34V46L26 58H2Z" fill="#f4f6f8" stroke="#555" strokeWidth="2" />
                      <path d="M26 14 34 2V46L26 58Z" fill="#c6ccd2" />
                    </svg>
                    PSU frame GEN2 v3
                  </RootLabel>
                  <svg width="10" height="18" viewBox="0 0 30 54" aria-hidden="true">
                    <ellipse cx="15" cy="27" rx="12" ry="23" fill="#fff" stroke="#333" strokeWidth="3" />
                    <ellipse cx="15" cy="27" rx="4" ry="7" fill="#222" />
                  </svg>
                </TreeItem>
              </TreeRow>
              {treeRows.map((r) => (
                <TreeRow key={r.label} $depth={1}>
                  <Expander aria-label={`Expand ${r.label}`}>
                    <Closed />
                  </Expander>
                  <TreeItem>
                    {r.eye && <Eye off={r.eye === "off"} />}
                    {r.icon === "gear" ? <Gear width={12} height={21} /> : <Folder />}
                    <TreeLabel>{r.label}</TreeLabel>
                  </TreeItem>
                </TreeRow>
              ))}
            </Tree>
          </div>
          <ViewCube />
        </UpperRow>
        <LowerRow>
          <Panel>
            <PanelLead />
            <PanelTitle>COMMENTS</PanelTitle>
            <PanelIcon aria-label="Expand comments">
              <RoundSign plus />
            </PanelIcon>
            <Grip />
          </Panel>
          <NavBar>
            {navTools.map((n) => (
              <NavButton key={n.name} aria-label={n.name}>
                {n.art}
                {n.menu && <Caret />}
              </NavButton>
            ))}
          </NavBar>
        </LowerRow>
      </Viewport>

      <Timeline>
        <Playback>
          {playback.map(([name, d]) => (
            <PlayButton key={name} aria-label={name}>
              <svg width="12" height="22" viewBox="0 0 36 62" aria-hidden="true">
                <path d={d} fill="#444" stroke="#444" strokeWidth="3" />
              </svg>
            </PlayButton>
          ))}
        </Playback>
        <Features>
          {features.map((f, i) => (
            <Feature key={i}>
              <FeatureIcon kind={f} />
            </Feature>
          ))}
        </Features>
        <Marker>
          <svg width="9" height="43" viewBox="0 0 27 129" aria-hidden="true">
            <path d="M1 1H26V22L16 36V128H11V36L1 22Z" fill="#5a5a5a" />
          </svg>
        </Marker>
        <Settings aria-label="Timeline settings">
          <Gear width={12} height={22} />
        </Settings>
      </Timeline>
    </Page>
  );
}
